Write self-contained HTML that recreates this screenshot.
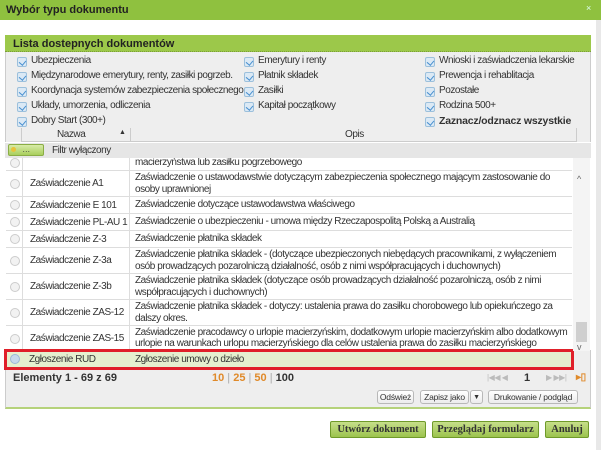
<!DOCTYPE html>
<html><head><meta charset="utf-8"><style>
*{margin:0;padding:0;box-sizing:border-box}
body{width:601px;height:450px;overflow:hidden;background:#fff;font-family:"Liberation Sans",sans-serif;font-size:10px;letter-spacing:-0.45px;color:#333;position:relative}
.a{position:absolute}
.cb{position:absolute;width:10px;height:10px;border:1px solid #9cc0dc;background:#dbe9f5;border-radius:2px}
.cb:after{content:"";position:absolute;left:2px;top:1px;width:4px;height:5px;border-right:1.5px solid #4a90d0;border-bottom:1.5px solid #4a90d0;transform:rotate(40deg)}
.lbl{position:absolute;white-space:nowrap}
.row{position:absolute;left:6px;width:566px;border-bottom:1px solid #ddd;background:#fff}
.row .r{position:absolute;left:4px;width:10px;height:10px;border-radius:50%;border:1px solid #ccc;background:#f2f2f2}
.row .n{position:absolute;left:16px;top:0;bottom:0;width:108px;border-left:1px solid #ddd;border-right:1px solid #ddd;padding-left:7px;display:flex;align-items:center;white-space:nowrap}
.row .o{position:absolute;left:124px;top:0;bottom:0;right:0;padding-left:5px;padding-right:4px;line-height:11.5px;display:flex;align-items:center}
.btn{position:absolute;border:1px solid #b8b8b8;border-radius:3px;background:linear-gradient(#fff,#ececec);font-size:8.5px;text-align:center;line-height:13px;color:#333;white-space:nowrap;letter-spacing:-0.2px}
.gb{position:absolute;border:1px solid #6f9a2a;border-radius:2px;background:linear-gradient(#c6df8a,#9cc34e);font-weight:bold;font-size:10.5px;text-align:center;line-height:15px;color:#333;font-family:"Liberation Serif",serif;letter-spacing:0;white-space:nowrap}
</style></head><body>
<div class="a" style="left:0;top:0;width:601px;height:20px;background:#8fc13f"></div>
<div class="lbl" style="left:6px;top:4px;font-weight:bold;font-size:11px;color:#222;letter-spacing:0">Wybór typu dokumentu</div>
<div class="lbl" style="left:586px;top:3px;color:#dfe;font-size:9px">×</div>
<div class="a" style="left:596px;top:20px;width:5px;height:430px;background:#e8e8e8"></div>
<div class="a" style="left:5px;top:35px;width:586px;height:374px;border:1px solid #ccc;border-bottom:2px solid #b5d27a;background:#eeeeee"></div>
<div class="a" style="left:5px;top:35px;width:586px;height:17px;background:#9cc84a;border-bottom:1px dotted #7a9e37"></div>
<div class="lbl" style="left:13px;top:38px;font-weight:bold;color:#222;font-size:11px;letter-spacing:0">Lista dostepnych dokumentów</div>

<div class="cb" style="left:17px;top:57px"></div><div class="lbl" style="left:31px;top:55px">Ubezpieczenia</div>
<div class="cb" style="left:17px;top:72px"></div><div class="lbl" style="left:31px;top:70px">Międzynarodowe emerytury, renty, zasiłki pogrzeb.</div>
<div class="cb" style="left:17px;top:87px"></div><div class="lbl" style="left:31px;top:85px">Koordynacja systemów zabezpieczenia społecznego</div>
<div class="cb" style="left:17px;top:102px"></div><div class="lbl" style="left:31px;top:100px">Układy, umorzenia, odliczenia</div>
<div class="cb" style="left:17px;top:117px"></div><div class="lbl" style="left:31px;top:115px">Dobry Start (300+)</div>
<div class="cb" style="left:244px;top:57px"></div><div class="lbl" style="left:258px;top:55px">Emerytury i renty</div>
<div class="cb" style="left:244px;top:72px"></div><div class="lbl" style="left:258px;top:70px">Płatnik składek</div>
<div class="cb" style="left:244px;top:87px"></div><div class="lbl" style="left:258px;top:85px">Zasiłki</div>
<div class="cb" style="left:244px;top:102px"></div><div class="lbl" style="left:258px;top:100px">Kapitał początkowy</div>
<div class="cb" style="left:425px;top:57px"></div><div class="lbl" style="left:439px;top:55px">Wnioski i zaświadczenia lekarskie</div>
<div class="cb" style="left:425px;top:72px"></div><div class="lbl" style="left:439px;top:70px">Prewencja i rehablitacja</div>
<div class="cb" style="left:425px;top:87px"></div><div class="lbl" style="left:439px;top:85px">Pozostałe</div>
<div class="cb" style="left:425px;top:102px"></div><div class="lbl" style="left:439px;top:100px">Rodzina 500+</div>
<div class="cb" style="left:425px;top:117px"></div><div class="lbl" style="left:439px;top:115px;font-weight:bold;font-size:10.5px;letter-spacing:-0.2px">Zaznacz/odznacz wszystkie</div>

<div class="a" style="left:21px;top:128px;width:556px;height:14px;border-left:1px solid #ccc;border-right:1px solid #ccc;border-bottom:1px solid #ccc"></div>
<div class="a" style="left:130px;top:128px;width:1px;height:14px;background:#ccc"></div>
<div class="lbl" style="left:57px;top:129px">Nazwa</div><div class="lbl" style="left:119px;top:129px;font-size:7px">▲</div>
<div class="lbl" style="left:345px;top:129px">Opis</div>
<div class="a" style="left:5px;top:142px;width:586px;height:16px;background:#e6e6e6;border-top:1px solid #fff"></div>
<div class="a" style="left:8px;top:144px;width:36px;height:12px;border:1px solid #8aad45;border-radius:2px;background:linear-gradient(#d8eba8,#a9cf5c);font-size:8px;line-height:9px;text-align:center">…</div>
<div class="a" style="left:11px;top:147px;width:5px;height:5px;border-radius:50%;background:#e8c33a"></div>
<div class="lbl" style="left:52px;top:145px">Filtr wyłączony</div>

<div class="a" style="left:5px;top:158px;width:586px;height:192px;background:#fff;overflow:hidden">
<div class="row" style="top:-2px;height:15px;left:1px"><div class="r" style="top:2px"></div><div class="n"></div><div class="o">macierzyństwa lub zasiłku pogrzebowego</div></div>
</div>
<div class="row" style="top:171px;height:26px"><div class="r" style="top:8px"></div><div class="n">Zaświadczenie A1</div><div class="o">Zaświadczenie o ustawodawstwie dotyczącym zabezpieczenia społecznego mającym zastosowanie do osoby uprawnionej</div></div>
<div class="row" style="top:197px;height:17px"><div class="r" style="top:3px"></div><div class="n">Zaświadczenie E 101</div><div class="o">Zaświadczenie dotyczące ustawodawstwa właściwego</div></div>
<div class="row" style="top:214px;height:17px"><div class="r" style="top:3px"></div><div class="n">Zaświadczenie PL-AU 1</div><div class="o">Zaświadczenie o ubezpieczeniu - umowa między Rzeczapospolitą Polską a Australią</div></div>
<div class="row" style="top:231px;height:17px"><div class="r" style="top:3px"></div><div class="n">Zaświadczenie Z-3</div><div class="o">Zaświadczenie płatnika składek</div></div>
<div class="row" style="top:248px;height:26px"><div class="r" style="top:8px"></div><div class="n">Zaświadczenie Z-3a</div><div class="o">Zaświadczenie płatnika składek - (dotyczące ubezpieczonych niebędących pracownikami, z wyłączeniem osób prowadzących pozarolniczą działalność, osób z nimi współpracujących i duchownych)</div></div>
<div class="row" style="top:274px;height:26px"><div class="r" style="top:8px"></div><div class="n">Zaświadczenie Z-3b</div><div class="o">Zaświadczenie płatnika składek (dotyczące osób prowadzących działalność pozarolniczą, osób z nimi współpracujących i duchownych)</div></div>
<div class="row" style="top:300px;height:26px"><div class="r" style="top:8px"></div><div class="n">Zaświadczenie ZAS-12</div><div class="o">Zaświadczenie płatnika składek - dotyczy: ustalenia prawa do zasiłku chorobowego lub opiekuńczego za dalszy okres.</div></div>
<div class="row" style="top:326px;height:25px"><div class="r" style="top:8px"></div><div class="n">Zaświadczenie ZAS-15</div><div class="o">Zaświadczenie pracodawcy o urlopie macierzyńskim, dodatkowym urlopie macierzyńskim albo dodatkowym urlopie na warunkach urlopu macierzyńskiego dla celów ustalenia prawa do zasiłku macierzyńskiego</div></div>
<div class="row" style="top:351px;height:17px;background:#e5f0cf;border:none"><div class="r" style="top:3px;border-color:#9cb8d6;background:#c7d9ec"></div><div class="n" style="border:none">Zgłoszenie RUD</div><div class="o">Zgłoszenie umowy o dzieło</div></div>
<div class="a" style="left:4px;top:349px;width:570px;height:21px;border:3px solid #e0202a"></div>

<div class="a" style="left:573px;top:158px;width:17px;height:193px;background:#f4f4f4"></div>
<div class="lbl" style="left:577px;top:174px;font-size:9px;color:#666">^</div>
<div class="a" style="left:576px;top:322px;width:11px;height:20px;background:#cfcfcf"></div>
<div class="lbl" style="left:577px;top:342px;font-size:9px;color:#666">v</div>

<div class="lbl" style="left:13px;top:372px;font-weight:bold;font-size:11px;letter-spacing:0">Elementy 1 - 69 z 69</div>
<div class="lbl" style="left:212px;top:372px;font-weight:bold;font-size:11px;color:#e08a2a;letter-spacing:0">10 <span style="color:#aaa;font-weight:normal">|</span> 25 <span style="color:#aaa;font-weight:normal">|</span> 50 <span style="color:#aaa;font-weight:normal">|</span> <span style="color:#333">100</span></div>
<div class="lbl" style="left:487px;top:373px;font-size:8px;color:#bbb">|◀◀ ◀</div>
<div class="lbl" style="left:524px;top:372px;font-weight:bold;font-size:11px">1</div>
<div class="lbl" style="left:546px;top:373px;font-size:8px;color:#bbb">▶ ▶▶|</div>
<div class="lbl" style="left:576px;top:372px;font-size:10px;color:#e08a2a;font-weight:bold">▸▯</div>

<div class="btn" style="left:377px;top:390px;width:37px;height:14px">Odśwież</div>
<div class="btn" style="left:420px;top:390px;width:49px;height:14px">Zapisz jako</div>
<div class="btn" style="left:470px;top:390px;width:13px;height:14px;font-size:7px">▼</div>
<div class="btn" style="left:488px;top:390px;width:90px;height:14px">Drukowanie / podgląd</div>

<div class="gb" style="left:330px;top:421px;width:96px;height:17px">Utwórz dokument</div>
<div class="gb" style="left:432px;top:421px;width:107px;height:17px">Przeglądaj formularz</div>
<div class="gb" style="left:545px;top:421px;width:44px;height:17px">Anuluj</div>
</body></html>
